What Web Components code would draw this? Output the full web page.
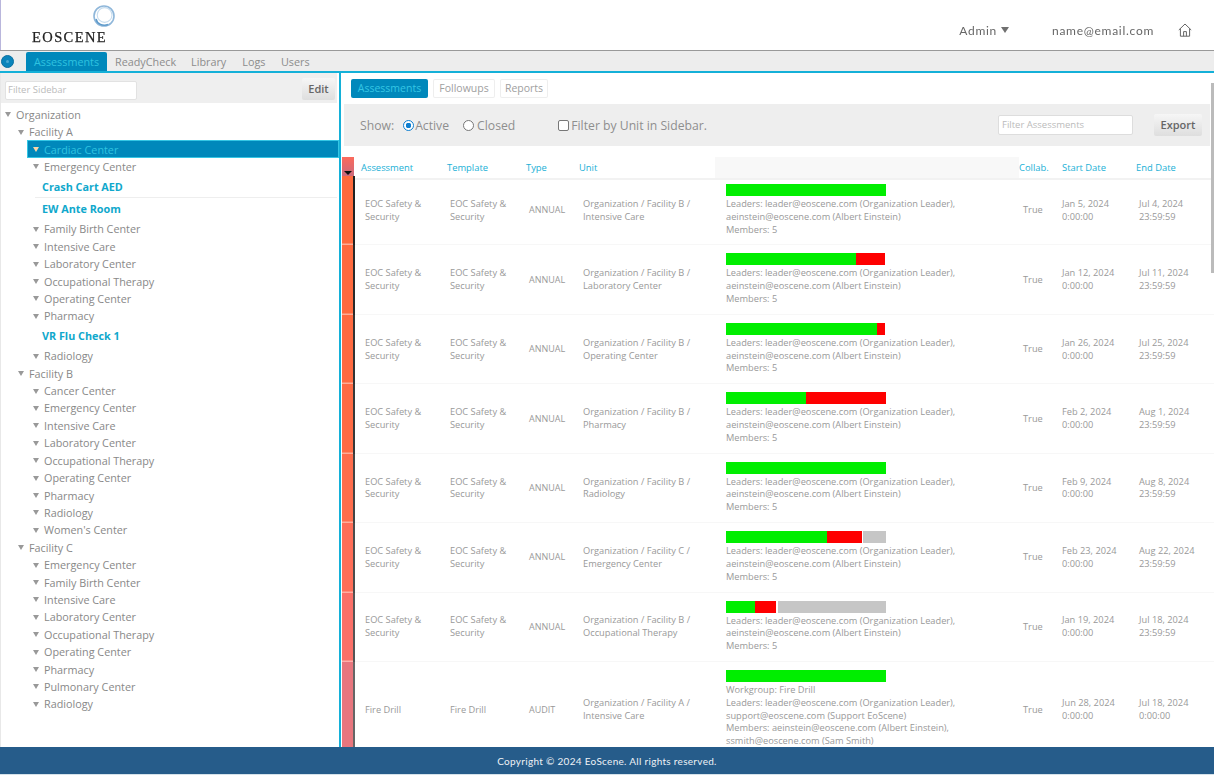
<!DOCTYPE html>
<html>
<head>
<meta charset="utf-8">
<title>EoScene</title>
<style>
    html, body { margin: 0; height: 100%; overflow: hidden; background: #fff; }
    body { font-family: "Open Sans", "Liberation Sans", sans-serif; color: #8e8e8e; }
</style>
</head>
<body>
<eo-app></eo-app>
<script>
class EoHeader extends HTMLElement {
    constructor() {
        super()
        this.attachShadow({ mode: 'open' }).innerHTML = `
            <style>
                :host { display: flex; align-items: flex-start; height: 50px; box-sizing: border-box; background: #fff;
                    border-left: 1px solid #b9b6dc; font-family: Lato, sans-serif; color: #666; font-size: 12px; letter-spacing: .72px; padding-right: 22px; }
                .logo { width: 84px; margin-left: 31px; display: flex; flex-direction: column; align-items: flex-end; }
                .logo svg { display: block; margin: 4px 0 0; }
                .logo span { align-self: flex-start; font: 14.5px "Liberation Serif", serif; color: #222; letter-spacing: 1.4px; -webkit-text-stroke: .25px #222; line-height: 15px; margin-top: 2px; white-space: nowrap; }
                .right { margin-left: auto; display: flex; align-items: center; height: 60px; }
                .admin { margin-right: 43px; display: flex; align-items: center; }
                .admin i { width: 0; height: 0; margin-left: 4px; border: 4px solid transparent; border-top: 6px solid #707070; border-bottom: 0; }
                .mail { margin-right: 24px; }
                svg.home { display: block; }
            </style>
            <div class="logo">
                <svg width="24" height="24" viewBox="0 0 24 24" fill="none">
                    <circle cx="12" cy="12" r="10" stroke="#8fb7da" stroke-width="1.6"/>
                    <path d="M4 15C5 20 11 22.5 16 20.5" stroke="#5f9bcb" stroke-width="1.5"/>
                    <circle cx="12.6" cy="11" r="7.4" stroke="#c6dcee" stroke-width="1.1"/>
                </svg>
                <span>EOSCENE</span>
            </div>
            <div class="right">
                <span class="admin">Admin<i></i></span>
                <span class="mail">name@email.com</span>
                <svg class="home" width="14" height="14" viewBox="0 0 14 14" fill="none" stroke="#666" stroke-width="1">
                    <path d="M.8 7 7 1l6.2 6M2.4 5.8v7.4h9.2V5.8M5.6 13.2V8.6h2.8v4.6"/>
                </svg>
            </div>`
    }
}
customElements.define('eo-header', EoHeader)

class EoNav extends HTMLElement {
    constructor() {
        super()
        this.attachShadow({ mode: 'open' }).innerHTML = `
            <style>
                :host { display: flex; align-items: flex-end; height: 23px; box-sizing: border-box; background: #ededed;
                    border-top: 1px solid #999; border-bottom: 2px solid #14b0d8; font-size: 10.8px; color: #8c8c8c; }
                .dot { margin: 0 0 3px 1px; border-radius: 50%; background: #0a84bb; border: 1px solid #0a6fa0; width: 11px; height: 11px; display: flex; align-items: center; justify-content: center; }
                .dot::after { content: ''; width: 3px; height: 3px; border-radius: 50%; background: #4aa8d2; }
                span { display: block; height: 19px; line-height: 20px; white-space: nowrap; }
                .on { margin-left: 12px; width: 81px; text-align: center; background: #0088bb; color: #2fc3e0; border-radius: 2px 2px 0 0; }
                .t1 { margin-left: 8px; } .t2 { margin-left: 15px; } .t3 { margin-left: 16px; } .t4 { margin-left: 15.5px; }
            </style>
            <div class="dot"></div>
            <span class="on">Assessments</span>
            <span class="t1">ReadyCheck</span>
            <span class="t2">Library</span>
            <span class="t3">Logs</span>
            <span class="t4">Users</span>`
    }
}
customElements.define('eo-nav', EoNav)

class EoTreeItem extends HTMLElement {
    constructor() {
        super()
        const level = this.getAttribute('level') || '0'
        const leaf = this.hasAttribute('leaf')
        const indent = [4, 17, 32][level]
        this.attachShadow({ mode: 'open' }).innerHTML = `
            <style>
                :host { display: flex; align-items: center; height: 17.42px; font-size: 10.8px; color: #888; white-space: nowrap; padding-left: ${indent}px; box-sizing: border-box; }
                :host([leaf]) { height: 22.5px; padding-left: 41px; font-size: 10.8px; font-weight: 700; color: #10a8cc; }
                :host([line]) { background: linear-gradient(#eee, #eee) no-repeat 34px 100% / 302px 1px; }
                :host([selected]) { margin-left: 26px; padding-left: 6px; background: #0088bb; color: #2fc3e0; outline: 1px solid #35c6e4; outline-offset: -1px; }
                i { width: 0; height: 0; margin: 1px 5px 0 0; border: 3.5px solid transparent; border-top: 5px solid #999; border-bottom: 0; }
                :host([selected]) i { border-top-color: #fcd6a8; margin-right: 5px; }
            </style>
            ${leaf ? '' : '<i></i>'}<slot></slot>`
    }
}
customElements.define('eo-tree-item', EoTreeItem)

class EoSidebar extends HTMLElement {
    constructor() {
        super()
        const units = {
            'Facility A': ['Cardiac Center', 'Emergency Center', '+Crash Cart AED', '+EW Ante Room', 'Family Birth Center', 'Intensive Care', 'Laboratory Center', 'Occupational Therapy', 'Operating Center', 'Pharmacy', '+VR Flu Check 1', 'Radiology'],
            'Facility B': ['Cancer Center', 'Emergency Center', 'Intensive Care', 'Laboratory Center', 'Occupational Therapy', 'Operating Center', 'Pharmacy', 'Radiology', "Women's Center"],
            'Facility C': ['Emergency Center', 'Family Birth Center', 'Intensive Care', 'Laboratory Center', 'Occupational Therapy', 'Operating Center', 'Pharmacy', 'Pulmonary Center', 'Radiology']
        }
        let rows = '<eo-tree-item level="0">Organization</eo-tree-item>'
        for (const f in units) {
            rows += `<eo-tree-item level="1">${f}</eo-tree-item>`
            for (const u of units[f]) {
                if (u[0] == '+') rows += `<eo-tree-item leaf ${u.includes('Crash') ? 'line' : ''}>${u.slice(1)}</eo-tree-item>`
                else rows += `<eo-tree-item level="2" ${u == 'Cardiac Center' ? 'selected' : ''}>${u}</eo-tree-item>`
            }
        }
        this.attachShadow({ mode: 'open' }).innerHTML = `
            <style>
                :host { display: block; width: 341px; box-sizing: border-box; background: #fff; border-left: 1px solid #e8e8e8; border-right: 2px solid #14b0d8; overflow: hidden; }
                .bar { display: flex; align-items: center; justify-content: space-between; height: 30px; margin-right: 2px; padding: 0 2px 0 4px; background: #efefef; }
                .filter { width: 132px; height: 19px; box-sizing: border-box; background: #fff; border: 1px solid #e2e2e2; border-radius: 2px; font-size: 9.5px; color: #bbb; padding-left: 2px; line-height: 16px; margin-top: 4px; }
                .edit { width: 33px; height: 22px; box-sizing: border-box; border-radius: 2px; background: linear-gradient(#f6f6f6, #dedede); font-size: 11px; font-weight: 600; color: #666; text-align: center; line-height: 21px; margin-top: 1px; }
                .tree { padding-top: 2.5px; }
            </style>
            <div class="bar"><div class="filter">Filter Sidebar</div><div class="edit">Edit</div></div>
            <div class="tree">${rows}</div>`
    }
}
customElements.define('eo-sidebar', EoSidebar)

class EoToolbar extends HTMLElement {
    constructor() {
        super()
        this.attachShadow({ mode: 'open' }).innerHTML = `
            <style>
                :host { display: block; font-size: 12.2px; color: #8e8e8e; }
                .tabs { display: flex; gap: 5px; height: 31px; padding: 6px 0 0 10px; box-sizing: border-box; font-size: 10.5px; }
                .tabs span { height: 19px; line-height: 19px; text-align: center; border-radius: 2px; box-shadow: inset 0 0 0 1px #eee; color: #a0a0a0; }
                .tabs .on { background: #0088bb; color: #35c6e4; box-shadow: none; }
                .bar { display: flex; align-items: center; height: 42px; margin: 0 4px 0 3px; background: #eeeeee; padding-left: 16px; }
                .radio { width: 9px; height: 9px; border-radius: 50%; border: 1.3px solid #777; margin-right: 3px; background: #fff; flex: none; }
                .radio.on { margin-right: 1px; border-color: #0f7fd0; background: radial-gradient(#0f7fd0 0 2.6px, #fff 3px); }
                .box { width: 9px; height: 9px; border: 1.3px solid #777; border-radius: 2px; margin-right: 2px; background: #fff; flex: none; }
                .input { margin: 0 0 1px auto; width: 135px; height: 20px; box-sizing: border-box; background: #fff; border: 1px solid #ddd; border-radius: 2px; font-size: 9.5px; color: #bbb; padding-left: 3px; line-height: 17px; }
                .export { margin: 0 8px 1px 21px; width: 48px; height: 22px; border-radius: 2px; background: linear-gradient(#f6f6f6, #dedede); font-size: 11px; font-weight: 600; color: #666; text-align: center; line-height: 22px; }
            </style>
            <div class="tabs">
                <span class="on" style="width:77px">Assessments</span>
                <span style="width:62px">Followups</span>
                <span style="width:48px">Reports</span>
            </div>
            <div class="bar">
                <span style="margin-right:9px">Show:</span>
                <i class="radio on"></i><span style="margin-right:14px">Active</span>
                <i class="radio"></i><span style="margin-right:43px">Closed</span>
                <i class="box"></i><span>Filter by Unit in Sidebar.</span>
                <div class="input">Filter Assessments</div>
                <div class="export">Export</div>
            </div>`
    }
}
customElements.define('eo-toolbar', EoToolbar)

class EoProgress extends HTMLElement {
    constructor() {
        super()
        const g = +this.getAttribute('g') || 0, r = +this.getAttribute('r') || 0, n = +this.getAttribute('n') || 0
        this.attachShadow({ mode: 'open' }).innerHTML = `
            <style>
                :host { display: flex; width: 160px; height: 12px; }
                b { display: block; height: 100%; }
                .n { margin-left: auto; background: #c6c6c6; }
            </style>
            <b style="width:${g}px;background:#00ee00"></b><b style="width:${r}px;background:#fe0000"></b>${n ? `<b class="n" style="width:${n}px"></b>` : ''}`
    }
}
customElements.define('eo-progress', EoProgress)

class EoRow extends HTMLElement {
    constructor() {
        super()
        this.attachShadow({ mode: 'open' }).innerHTML = `
            <style>
                :host { display: grid; grid-template-columns: var(--cols); height: 69.43px; box-sizing: border-box; font-size: 9.25px; line-height: 12.8px; color: #999; }
                .strip { background: var(--strip); border-right: 2px solid var(--edge); box-shadow: inset 0 -1.5px 0 rgba(255,255,255,.45); }
                .c { display: flex; align-items: center; border-bottom: 1px solid #f7f7f7; padding: 1px 0 0 var(--p, 4px); }
                .gap { border-bottom: 1px solid #f7f7f7; }
                .prog { padding: 8px 0 0 11px; border-bottom: 1px solid #f7f7f7; overflow: hidden; white-space: nowrap; }
                .info { margin-top: 2px; }
            </style>
            <div class="strip"></div><div class="gap"></div>
            <div class="c"><span>${this.getAttribute('name')}</span></div>
            <div class="c" style="--p:3px"><span>${this.getAttribute('name')}</span></div>
            <div class="c" style="--p:3px;font-size:9px"><span>${this.getAttribute('type')}</span></div>
            <div class="c"><span>${this.getAttribute('unit')}</span></div>
            <div class="prog"><slot name="bar"></slot><div class="info"><slot></slot></div></div>
            <div class="c"><span>True</span></div>
            <div class="c" style="--p:0"><span>${this.getAttribute('start')}</span></div>
            <div class="c" style="--p:3px"><span>${this.getAttribute('end')}</span></div>`
    }
}
customElements.define('eo-row', EoRow)

class EoTable extends HTMLElement {
    constructor() {
        super()
        const lead = 'Leaders: leader@eoscene.com (Organization Leader),<br>aeinstein@eoscene.com (Albert Einstein)<br>Members: 5'
        const eoc = 'EOC Safety &amp;<br>Security'
        const rows = [
            ['Organization / Facility B /<br>Intensive Care', 'Jan 5, 2024', 'Jul 4, 2024', 160, 0, 0, '#ff6a3c', '#222'],
            ['Organization / Facility B /<br>Laboratory Center', 'Jan 12, 2024', 'Jul 11, 2024', 130, 29, 0, '#ff6a3e', '#2a2a2a'],
            ['Organization / Facility B /<br>Operating Center', 'Jan 26, 2024', 'Jul 25, 2024', 151, 8, 0, '#ff6a40', '#333'],
            ['Organization / Facility B /<br>Pharmacy', 'Feb 2, 2024', 'Aug 1, 2024', 80, 80, 0, '#ff6b44', '#383838'],
            ['Organization / Facility B /<br>Radiology', 'Feb 9, 2024', 'Aug 8, 2024', 160, 0, 0, '#ff6d4c', '#444'],
            ['Organization / Facility C /<br>Emergency Center', 'Feb 23, 2024', 'Aug 22, 2024', 101, 35, 23, '#ff6e58', '#4c4c4c'],
            ['Organization / Facility B /<br>Occupational Therapy', 'Jan 19, 2024', 'Jul 18, 2024', 29, 21, 108, '#fb7068', '#555'],
        ]
        let html = ''
        for (const r of rows) {
            html += `<eo-row style="--strip:${r[6]};--edge:${r[7]}" name="${eoc}" type="ANNUAL" unit="${r[0]}" start="${r[1]}<br>0:00:00" end="${r[2]}<br>23:59:59">
                <eo-progress slot="bar" g="${r[3]}" r="${r[4]}" n="${r[5]}"></eo-progress>${lead}</eo-row>`
        }
        html += `<eo-row style="height:96px;--strip:#e8767e;--edge:#666" name="Fire Drill" type="AUDIT" unit="Organization / Facility A /<br>Intensive Care" start="Jun 28, 2024<br>0:00:00" end="Jul 18, 2024<br>0:00:00">
            <eo-progress slot="bar" g="160"></eo-progress>Workgroup: Fire Drill<br>Leaders: leader@eoscene.com (Organization Leader),<br>support@eoscene.com (Support EoScene)<br>Members: aeinstein@eoscene.com (Albert Einstein),<br>ssmith@eoscene.com (Sam Smith)</eo-row>`
        this.attachShadow({ mode: 'open' }).innerHTML = `
            <style>
                :host { display: block; flex: 1; min-height: 0; overflow: hidden; margin-top: 11px; padding-left: 1px;
                    --cols: 13px 6px 86px 79px 53px 136px 304px 43px 74px 78px; }
                .head { display: grid; grid-template-columns: var(--cols); height: 19px; font-size: 9.4px; color: #1ab0d6; line-height: 21px; }
                .sort { background: linear-gradient(#fb6a5c, #c76a80); border-bottom: 2px solid #0f9cc4; display: flex; align-items: flex-end; justify-content: center; box-sizing: border-box; padding-bottom: 1px; margin-right: 1px; }
                .sort i { width: 0; height: 0; border: 4px solid transparent; border-top: 4px solid #111; border-bottom: 0; margin-bottom: 2px; }
                .head span { border-bottom: 2px solid #f2f2f2; white-space: nowrap; }
                .head .blank { background: #f8f8f8; }
            </style>
            <div class="head">
                <div class="sort"><i></i></div><span></span>
                <span>Assessment</span><span>Template</span><span>Type</span><span>Unit</span>
                <span class="blank"></span><span>Collab.</span><span>Start Date</span><span>End Date</span>
            </div>
            ${html}`
    }
}
customElements.define('eo-table', EoTable)

class EoMain extends HTMLElement {
    constructor() {
        super()
        this.attachShadow({ mode: 'open' }).innerHTML = `
            <style>
                :host { display: flex; flex-direction: column; flex: 1; min-width: 0; position: relative; overflow: hidden; background: #fff; }
                .thumb { position: absolute; top: 10px; right: 0; width: 3px; height: 190px; background: #bbb; }
            </style>
            <eo-toolbar></eo-toolbar>
            <eo-table></eo-table>
            <div class="thumb"></div>`
    }
}
customElements.define('eo-main', EoMain)

class EoFooter extends HTMLElement {
    constructor() {
        super()
        this.attachShadow({ mode: 'open' }).innerHTML = `
            <style>
                :host { display: block; height: 28px; box-sizing: border-box; background: #265c8a; border-bottom: 1px solid #d5e2ea; color: #eef2f6; font: 10px/29px Lato, sans-serif; letter-spacing: .3px; text-align: center; }
            </style>
            Copyright © 2024 EoScene. All rights reserved.`
    }
}
customElements.define('eo-footer', EoFooter)

class EoApp extends HTMLElement {
    constructor() {
        super()
        this.attachShadow({ mode: 'open' }).innerHTML = `
            <style>
                :host { display: flex; flex-direction: column; height: 775px; width: 1214px; overflow: hidden; filter: blur(.7px); }
                .body { display: flex; flex: 1; min-height: 0; }
            </style>
            <eo-header></eo-header>
            <eo-nav></eo-nav>
            <div class="body"><eo-sidebar></eo-sidebar><eo-main></eo-main></div>
            <eo-footer></eo-footer>`
    }
}
customElements.define('eo-app', EoApp)
</script>
</body>
</html>
